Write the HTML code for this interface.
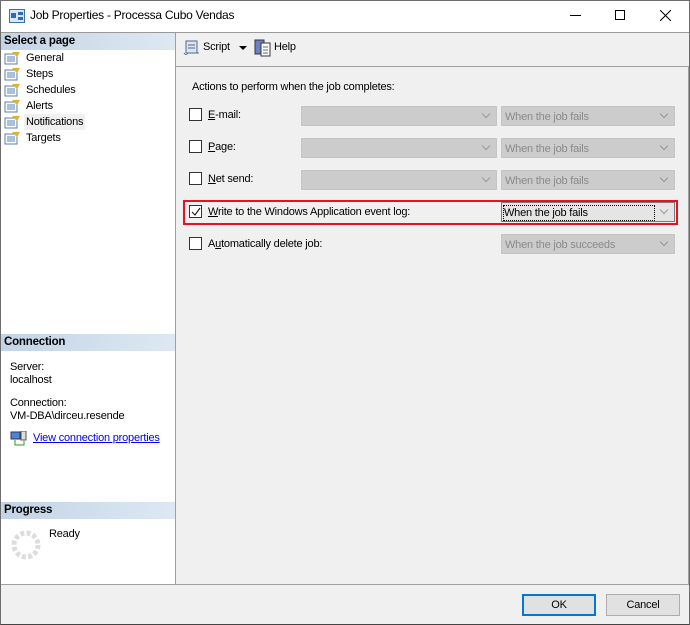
<!DOCTYPE html>
<html><head><style>
*{box-sizing:border-box;margin:0;padding:0}
body{width:690px;height:625px;position:relative;font-family:"Liberation Sans",sans-serif;font-size:11px;letter-spacing:-0.2px;color:#000;background:#f0f0f0;overflow:hidden}
.a{position:absolute}
.hdr{position:absolute;left:1px;width:174px;height:17px;background:linear-gradient(to right,#c3d4e6,#dde8f3);font-weight:bold;padding:2px 3px;font-size:11.5px}
.nav{position:absolute;left:4px;height:16px;line-height:16px}
.nav span{position:absolute;left:20px;top:0;padding:0 2px;white-space:nowrap}
.ico{position:absolute;left:0;top:1px;width:17px;height:14px}
.cb{position:absolute;width:13px;height:13px;border:1px solid #333;background:#fff}
.dd{position:absolute;height:20px;background:#cccccc;border:1px solid #c4c4c4;color:#8a8a8a;padding:3px 3px;line-height:14px;white-space:nowrap}
.dd:after{content:"";position:absolute;right:7px;top:4px;width:5px;height:5px;border-right:1px solid #999;border-bottom:1px solid #999;transform:rotate(45deg)}
.lbl{position:absolute;line-height:14px;white-space:nowrap}
u{text-decoration:underline}
</style></head><body>
<div class="a" style="left:0;top:0;width:690px;height:625px;border:1px solid #6d6d6d;border-bottom-color:#444"></div>
<div class="a" style="left:1px;top:1px;width:688px;height:31px;background:#fff"></div>
<svg class="a" style="left:9px;top:9px" width="16" height="14"><rect x="0.5" y="0.5" width="15" height="13" fill="#dbe7f5" stroke="#3a6fb5"/><rect x="2" y="4" width="5" height="5" fill="#2e69c0"/><rect x="9" y="3" width="5" height="3" fill="#2e69c0"/><rect x="9" y="8" width="5" height="3" fill="#2e69c0"/></svg>
<div class="a" style="left:30px;top:8px;font-size:12px;letter-spacing:-0.25px">Job Properties - Processa Cubo Vendas</div>
<div class="a" style="left:570px;top:15px;width:11px;height:1px;background:#000"></div>
<div class="a" style="left:615px;top:10px;width:10px;height:10px;border:1px solid #000"></div>
<svg class="a" style="left:660px;top:10px" width="11" height="11"><path d="M0 0L11 11M11 0L0 11" stroke="#000" stroke-width="1"/></svg>
<div class="a" style="left:1px;top:32px;width:688px;height:1px;background:#999"></div>
<div class="a" style="left:1px;top:33px;width:174px;height:551px;background:#fff"></div>
<div class="a" style="left:175px;top:33px;width:1px;height:551px;background:#a0a0a0"></div>
<div class="hdr" style="top:33px">Select a page</div>
<div class="nav" style="top:50px"><svg class="ico"><rect x="1" y="3" width="12" height="10" fill="#fff" stroke="#5b7db0"/><path d="M3 6h8M3 8h8M3 10h8" stroke="#5b7db0"/><path d="M8 1l8 0-3 5z" fill="#e0b030"/></svg><span>General</span></div>
<div class="nav" style="top:66px"><svg class="ico"><rect x="1" y="3" width="12" height="10" fill="#fff" stroke="#5b7db0"/><path d="M3 6h8M3 8h8M3 10h8" stroke="#5b7db0"/><path d="M8 1l8 0-3 5z" fill="#e0b030"/></svg><span>Steps</span></div>
<div class="nav" style="top:82px"><svg class="ico"><rect x="1" y="3" width="12" height="10" fill="#fff" stroke="#5b7db0"/><path d="M3 6h8M3 8h8M3 10h8" stroke="#5b7db0"/><path d="M8 1l8 0-3 5z" fill="#e0b030"/></svg><span>Schedules</span></div>
<div class="nav" style="top:98px"><svg class="ico"><rect x="1" y="3" width="12" height="10" fill="#fff" stroke="#5b7db0"/><path d="M3 6h8M3 8h8M3 10h8" stroke="#5b7db0"/><path d="M8 1l8 0-3 5z" fill="#e0b030"/></svg><span>Alerts</span></div>
<div class="nav" style="top:114px"><svg class="ico"><rect x="1" y="3" width="12" height="10" fill="#fff" stroke="#5b7db0"/><path d="M3 6h8M3 8h8M3 10h8" stroke="#5b7db0"/><path d="M8 1l8 0-3 5z" fill="#e0b030"/></svg><span style="background:#f0f0f0">Notifications</span></div>
<div class="nav" style="top:130px"><svg class="ico"><rect x="1" y="3" width="12" height="10" fill="#fff" stroke="#5b7db0"/><path d="M3 6h8M3 8h8M3 10h8" stroke="#5b7db0"/><path d="M8 1l8 0-3 5z" fill="#e0b030"/></svg><span>Targets</span></div>
<div class="hdr" style="top:334px">Connection</div>
<div class="a" style="left:10px;top:361px">Server:</div>
<div class="a" style="left:10px;top:374px">localhost</div>
<div class="a" style="left:10px;top:397px">Connection:</div>
<div class="a" style="left:10px;top:410px">VM-DBA\dirceu.resende</div>
<svg class="a" style="left:10px;top:431px" width="17" height="15"><rect x="1" y="1" width="9" height="7" fill="#4a86d8" stroke="#335"/><rect x="11" y="0" width="5" height="9" fill="#ddd" stroke="#555"/><path d="M5 9v5h9v-4" stroke="#2a9a2a" fill="none"/></svg>
<div class="a" style="left:33px;top:432px;color:#0000ee;text-decoration:underline">View connection properties</div>
<div class="hdr" style="top:502px">Progress</div>
<svg class="a" style="left:10px;top:529px" width="32" height="32"><circle cx="16" cy="16" r="12" fill="none" stroke="#ddd" stroke-width="5" stroke-dasharray="4 2.3"/></svg>
<div class="a" style="left:49px;top:528px">Ready</div>
<svg class="a" style="left:182px;top:39px" width="18" height="18"><path d="M4 2h11v12H4z" fill="#dde4ee" stroke="#4d6a8f"/><path d="M2 14c2 3 4 0 4 0h11" stroke="#4d6a8f" fill="#dde4ee"/><path d="M6 6h7M6 9h7" stroke="#4d6a8f"/></svg>
<div class="a" style="left:203px;top:41px">Script</div>
<div class="a" style="left:239px;top:46px;width:0;height:0;border-left:4px solid transparent;border-right:4px solid transparent;border-top:4px solid #000"></div>
<svg class="a" style="left:254px;top:39px" width="18" height="18"><rect x="1" y="1" width="9" height="14" fill="#6b82c4" stroke="#334"/><rect x="7" y="4" width="9" height="13" fill="#fff" stroke="#334"/><path d="M9 8h5M9 11h5M9 14h5" stroke="#667"/></svg>
<div class="a" style="left:274px;top:41px">Help</div>
<div class="a" style="left:176px;top:66px;width:512px;height:1px;background:#a0a0a0"></div>
<div class="a" style="left:688px;top:66px;width:1px;height:518px;background:#a0a0a0"></div>
<div class="lbl" style="left:192px;top:80px">Actions to perform when the job completes:</div>
<div class="cb" style="left:189px;top:108px"></div><div class="lbl" style="left:208px;top:108px"><u>E</u>-mail:</div>
<div class="dd" style="left:301px;top:106px;width:196px"></div><div class="dd" style="left:501px;top:106px;width:174px">When the job fails</div>
<div class="cb" style="left:189px;top:140px"></div><div class="lbl" style="left:208px;top:140px"><u>P</u>age:</div>
<div class="dd" style="left:301px;top:138px;width:196px"></div><div class="dd" style="left:501px;top:138px;width:174px">When the job fails</div>
<div class="cb" style="left:189px;top:172px"></div><div class="lbl" style="left:208px;top:172px"><u>N</u>et send:</div>
<div class="dd" style="left:301px;top:170px;width:196px"></div><div class="dd" style="left:501px;top:170px;width:174px">When the job fails</div>
<div class="a" style="left:183px;top:200px;width:495px;height:25px;border:2px solid #e81123"></div>
<div class="cb" style="left:189px;top:205px"></div>
<svg class="a" style="left:191px;top:207px" width="10" height="10"><path d="M1 5l3 3 5-7" stroke="#222" fill="none" stroke-width="1.2"/></svg>
<div class="lbl" style="left:208px;top:205px"><u>W</u>rite to the Windows Application event log:</div>
<div class="dd" style="left:501px;top:202px;width:174px;background:#e5e5e5;border-color:#7a7a7a;color:#000"><span style="outline:1px dotted #000;display:inline-block;width:150px;margin-left:-1px">When the job fails</span></div>
<div class="cb" style="left:189px;top:237px"></div><div class="lbl" style="left:208px;top:237px">A<u>u</u>tomatically delete job:</div>
<div class="dd" style="left:501px;top:234px;width:174px">When the job succeeds</div>
<div class="a" style="left:1px;top:584px;width:688px;height:1px;background:#a0a0a0"></div>
<div class="a" style="left:522px;top:594px;width:74px;height:22px;border:2px solid #0078d7;background:#e1e1e1;text-align:center;line-height:18px">OK</div>
<div class="a" style="left:606px;top:594px;width:74px;height:22px;border:1px solid #adadad;background:#e1e1e1;text-align:center;line-height:20px">Cancel</div>
</body></html>
